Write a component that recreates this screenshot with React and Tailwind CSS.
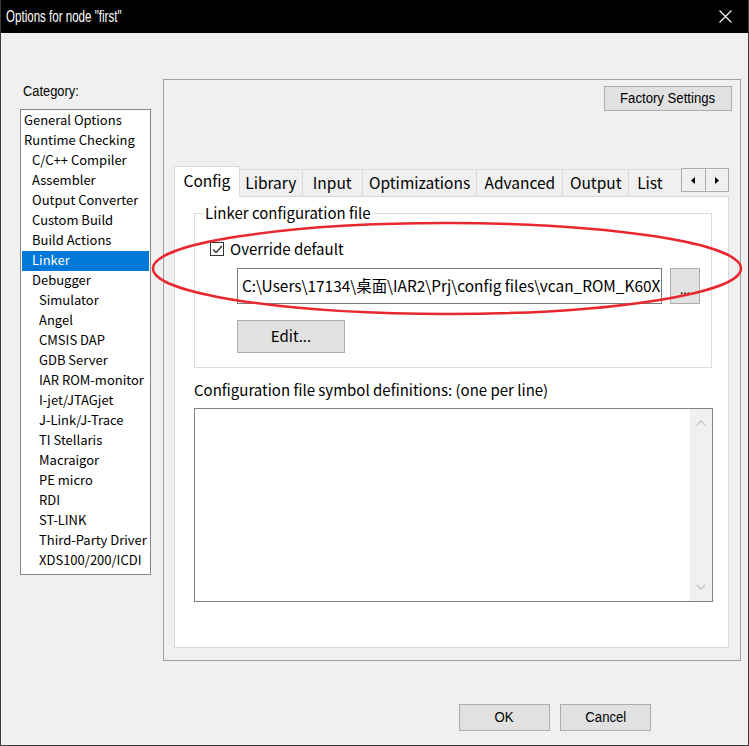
import React from 'react'

// Tree of option categories, indent level 0..2
const CATEGORIES = [
    ['General Options', 0],
    ['Runtime Checking', 0],
    ['C/C++ Compiler', 1],
    ['Assembler', 1],
    ['Output Converter', 1],
    ['Custom Build', 1],
    ['Build Actions', 1],
    ['Linker', 1],
    ['Debugger', 1],
    ['Simulator', 2],
    ['Angel', 2],
    ['CMSIS DAP', 2],
    ['GDB Server', 2],
    ['IAR ROM-monitor', 2],
    ['I-jet/JTAGjet', 2],
    ['J-Link/J-Trace', 2],
    ['TI Stellaris', 2],
    ['Macraigor', 2],
    ['PE micro', 2],
    ['RDI', 2],
    ['ST-LINK', 2],
    ['Third-Party Driver', 2],
    ['XDS100/200/ICDI', 2],
]

const INDENT = ['pl-[2px]', 'pl-[10px]', 'pl-[17px]']

const TABS = [
    { label: 'Config', w: 'w-[66px]' },
    { label: 'Library', w: 'w-[63px]' },
    { label: 'Input', w: 'w-[60px]' },
    { label: 'Optimizations', w: 'w-[115px]' },
    { label: 'Advanced', w: 'w-[86px]' },
    { label: 'Output', w: 'w-[66px]' },
]

const UI_FONT = "font-['Noto_Sans_CJK_SC','Noto_Sans',sans-serif]"
const OLD_FONT = "font-['Liberation_Sans',Arial,sans-serif]"

// ── Small pieces ──────────────────────────────────────────────────────────────

function OldButton({ label, className }) {
    return (
        <div className={`flex items-center justify-center border border-[#adadad] bg-[#e1e1e1] text-[14px] text-black ${OLD_FONT} ${className}`}>
            <span className="inline-block origin-center scale-x-[0.94]">{label}</span>
        </div>
    )
}

function Chevron({ up }) {
    return (
        <svg width="10" height="6" viewBox="0 0 10 6">
            <polyline
                points={up ? '1,5 5,1 9,5' : '1,1 5,5 9,1'}
                fill="none"
                stroke="#c2c2c2"
                strokeWidth="1.3"
            />
        </svg>
    )
}

// ── Main component ────────────────────────────────────────────────────────────

export default function App() {
    return (
        <div className="relative flex h-[746px] w-[749px] flex-col overflow-hidden border-x border-b border-[#3a3a3a] bg-[#f0f0f0]">

            {/* Title bar */}
            <div className="flex h-[33px] shrink-0 items-center justify-between bg-black pl-[5px] pr-[16px]">
                <span className={`inline-block origin-left scale-x-[0.68] text-[17px] text-white ${OLD_FONT}`}>
                    Options for node "first"
                </span>
                <svg width="13" height="13" viewBox="0 0 13 13">
                    <path d="M0.5 0.5 L12.5 12.5 M12.5 0.5 L0.5 12.5" stroke="#ffffff" strokeWidth="1.1" />
                </svg>
            </div>

            <div className="flex h-[628px] shrink-0 items-start gap-[12px] pl-[19px]">

                {/* Category tree */}
                <div className="flex w-[131px] flex-col pt-[49px]">
                    <div className={`h-[18px] pl-[3px] text-[14px] leading-[18px] text-black ${OLD_FONT}`}>
                        <span className="inline-block origin-left scale-x-[0.92]">Category:</span>
                    </div>
                    <div className={`mt-[9px] h-[466px] border border-[#828790] bg-white px-px pt-px ${UI_FONT}`}>
                        {CATEGORIES.map(([name, level]) => (
                            <div
                                key={name}
                                className={`h-[20px] whitespace-nowrap text-[13px] leading-[18px] ${INDENT[level]} ${name === 'Linker' ? 'bg-[#0078d7] text-white' : 'text-black'}`}
                            >
                                {name}
                            </div>
                        ))}
                    </div>
                </div>

                {/* Options panel */}
                <div className="mt-[46px] flex h-[582px] w-[578px] flex-col border border-[#a0a0a0]">
                    <div className="flex justify-end pr-[8px] pt-[6px]">
                        <OldButton label="Factory Settings" className="h-[25px] w-[128px]" />
                    </div>

                    <div className={`ml-[10px] mr-[11px] mt-[55px] ${UI_FONT}`}>
                        {/* Tab strip */}
                        <div className="flex h-[30px] items-end">
                            {TABS.map(({ label, w }, i) =>
                                i === 0 ? (
                                    <div
                                        key={label}
                                        className={`relative z-10 -mb-px flex h-[31px] items-start justify-center border-x border-t border-[#d9d9d9] bg-white pt-[2px] text-[15.5px] text-black ${w}`}
                                    >
                                        {label}
                                    </div>
                                ) : (
                                    <div
                                        key={label}
                                        className={`flex h-[27px] items-center justify-center border-r border-t border-[#d9d9d9] bg-[#f0f0f0] text-[15.5px] text-black ${w}`}
                                    >
                                        {label}
                                    </div>
                                )
                            )}
                            <div className="flex h-[27px] w-[52px] items-center border-t border-[#d9d9d9] pl-[8px] text-[15.5px] text-black">
                                List
                            </div>
                            <div className="mb-[4px] flex h-[24px] w-[48px] self-end">
                                <div className="flex flex-1 items-center justify-center border border-[#adadad] bg-[#f0f0f0]">
                                    <svg width="4" height="7" viewBox="0 0 4 7"><polygon points="4,0 0,3.5 4,7" fill="#000" /></svg>
                                </div>
                                <div className="flex flex-1 items-center justify-center border border-l-0 border-[#adadad] bg-[#f0f0f0]">
                                    <svg width="4" height="7" viewBox="0 0 4 7"><polygon points="0,0 4,3.5 0,7" fill="#000" /></svg>
                                </div>
                            </div>
                        </div>

                        {/* Tab page */}
                        <div className="h-[452px] border border-[#d9d9d9] bg-white pl-[19px] pt-[6px]">

                            {/* Linker configuration file group */}
                            <fieldset className="h-[165px] w-[518px] border border-[#dcdcdc]">
                                <legend className="ml-[8px] px-[2px] text-[15px] leading-[20px] text-black">
                                    Linker configuration file
                                </legend>

                                <div className="mt-[16px] flex h-[20px] items-center gap-[6px] pl-[15px]">
                                    <div className="flex h-[14px] w-[14px] items-center justify-center border border-[#333333] bg-white">
                                        <svg width="11" height="9" viewBox="0 0 11 9">
                                            <polyline points="1,4.5 4,7.5 10,1" fill="none" stroke="#333333" strokeWidth="1.4" />
                                        </svg>
                                    </div>
                                    <span className="text-[15px] text-black">Override default</span>
                                </div>

                                <div className="ml-[42px] mt-[9px] flex gap-[8px]">
                                    <div className="flex h-[36px] w-[425px] items-center overflow-hidden whitespace-nowrap border border-[#7a7a7a] bg-white pl-[4px] text-[15.4px] text-black">
                                        {'C:\\Users\\17134\\桌面\\IAR2\\Prj\\config files\\vcan_ROM_K60X'}
                                    </div>
                                    <div className="flex h-[36px] w-[30px] items-end justify-center border border-[#adadad] bg-[#e1e1e1] pb-[8px] text-[12px] leading-none text-black">
                                        ...
                                    </div>
                                </div>

                                <div className="ml-[42px] mt-[16px] flex h-[33px] w-[108px] items-center justify-center border border-[#adadad] bg-[#e1e1e1] text-[15px] text-black">
                                    Edit...
                                </div>
                            </fieldset>

                            {/* Symbol definitions */}
                            <div className="mt-[12px] h-[20px] text-[15px] leading-[20px] text-black">
                                Configuration file symbol definitions: (one per line)
                            </div>
                            <div className="mt-[8px] flex h-[194px] w-[519px] border border-[#828282] bg-white">
                                <div className="flex-1" />
                                <div className="flex w-[22px] flex-col items-center justify-between bg-[#f0f0f0] py-[11px]">
                                    <Chevron up />
                                    <Chevron />
                                </div>
                            </div>
                        </div>
                    </div>
                </div>
            </div>

            {/* Dialog buttons */}
            <div className="mt-[43px] flex justify-end gap-[10px] pr-[97px]">
                <OldButton label="OK" className="h-[27px] w-[91px]" />
                <OldButton label="Cancel" className="h-[27px] w-[91px]" />
            </div>

            {/* Red annotation ellipse drawn over the dialog */}
            <svg className="pointer-events-none absolute left-0 top-0" width="749" height="746">
                <ellipse cx="446" cy="268.5" rx="294" ry="45.5" fill="none" stroke="#e8282e" strokeWidth="2.5" />
            </svg>
        </div>
    )
}
